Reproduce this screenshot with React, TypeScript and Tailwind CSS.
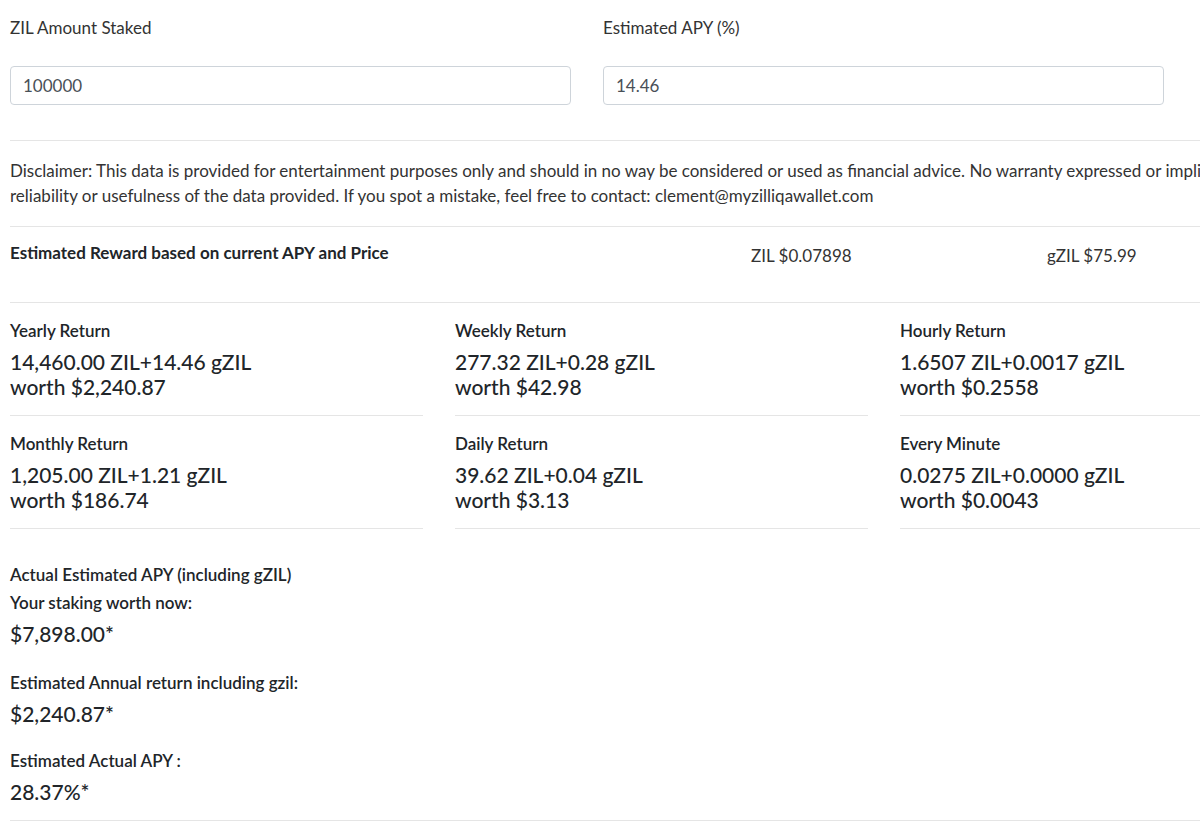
import React from "react";

const returns = [
  { title: "Yearly Return", amount: "14,460.00 ZIL+14.46 gZIL", worth: "worth $2,240.87" },
  { title: "Weekly Return", amount: "277.32 ZIL+0.28 gZIL", worth: "worth $42.98" },
  { title: "Hourly Return", amount: "1.6507 ZIL+0.0017 gZIL", worth: "worth $0.2558" },
  { title: "Monthly Return", amount: "1,205.00 ZIL+1.21 gZIL", worth: "worth $186.74" },
  { title: "Daily Return", amount: "39.62 ZIL+0.04 gZIL", worth: "worth $3.13" },
  { title: "Every Minute", amount: "0.0275 ZIL+0.0000 gZIL", worth: "worth $0.0043" },
];

function Rule({ className = "" }: { className?: string }) {
  return <div className={`h-px bg-[#e5e5e5] ${className}`} />;
}

function Field({ label, value }: { label: string; value: string }) {
  return (
    <div>
      <div className="text-[17px] leading-[24px] text-[#333]">{label}</div>
      <div className="mt-[26px] h-[39px] rounded-[4px] border border-[#ced4da] bg-white px-[12px] flex items-center text-[17px] text-[#495057]">
        {value}
      </div>
    </div>
  );
}

export default function App() {
  return (
    <div
      className="w-[1200px] h-[822px] overflow-hidden bg-white text-[#212529]"
      style={{ fontFamily: "Lato, 'Open Sans', sans-serif" }}
    >
      <div className="w-[1340px] pl-[10px] pt-[16px]">
        <div className="grid grid-cols-[561px_561px] gap-x-[32px]">
          <Field label="ZIL Amount Staked" value="100000" />
          <Field label="Estimated APY (%)" value="14.46" />
        </div>

        <Rule className="mt-[35px]" />

        <div className="mt-[17px] text-[17px] leading-[25px] whitespace-nowrap text-[#333]">
          <div>
            Disclaimer: This data is provided for entertainment purposes only and should in no way be considered or used as financial advice. No warranty expressed or implied as to the accuracy,
          </div>
          <div>
            reliability or usefulness of the data provided. If you spot a mistake, feel free to contact: clement@myzilliqawallet.com
          </div>
        </div>

        <Rule className="mt-[18px]" />

        <div className="h-[75px] pt-[14px] grid grid-cols-[741px_296px_1fr] text-[17px] leading-[24px]">
          <div className="font-bold">Estimated Reward based on current APY and Price</div>
          <div className="pt-[3px] text-[#333]">ZIL $0.07898</div>
          <div className="pt-[3px] text-[#333]">gZIL $75.99</div>
        </div>

        <Rule />

        <div className="grid grid-cols-[413px_413px_413px] gap-x-[32px]">
          {returns.map((r) => (
            <div key={r.title} className="pt-4">
              <div className="text-[17px] leading-[24px] font-semibold">{r.title}</div>
              <div className="mt-[6px] text-[21px] leading-[25px] font-medium">
                <div>{r.amount}</div>
                <div>{r.worth}</div>
              </div>
              <Rule className="mt-4" />
            </div>
          ))}
        </div>

        <div className="mt-[34px]">
          <div className="text-[17px] leading-[24px] font-semibold">Actual Estimated APY (including gZIL)</div>
          <div className="mt-[4px] text-[17px] leading-[24px] font-semibold">Your staking worth now:</div>
          <div className="mt-[6px] text-[21px] leading-[25px] font-medium">$7,898.00*</div>
          <div className="mt-[25px] text-[17px] leading-[24px] font-semibold">Estimated Annual return including gzil:</div>
          <div className="mt-[6px] text-[21px] leading-[25px] font-medium">$2,240.87*</div>
          <div className="mt-[23px] text-[17px] leading-[24px] font-semibold">Estimated Actual APY :</div>
          <div className="mt-[6px] text-[21px] leading-[25px] font-medium">28.37%*</div>
        </div>

        <Rule className="mt-[16px]" />
      </div>
    </div>
  );
}
